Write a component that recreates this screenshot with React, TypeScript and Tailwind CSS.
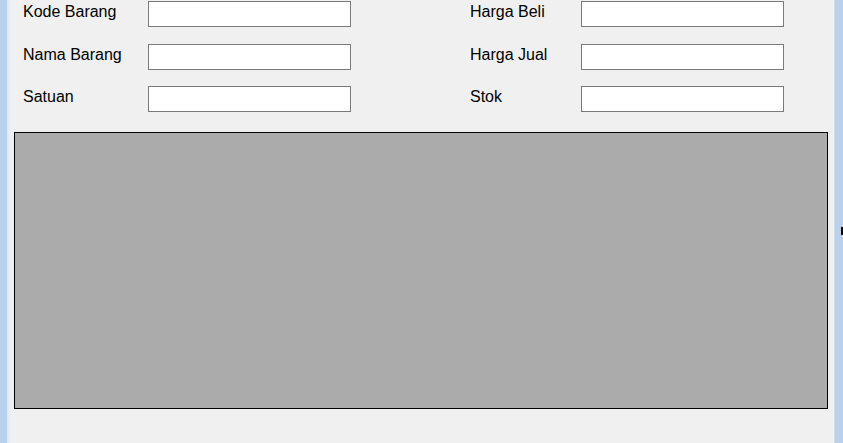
import React from "react";

function Field({ label, labelW }: { label: string; labelW: string }) {
  return (
    <div className="flex items-start">
      <div className={`${labelW} mt-[2px] text-[16px] leading-[18px] text-black`}>{label}</div>
      <div className="w-[203px] h-[26px] border border-[#7a7a7a] bg-white" />
    </div>
  );
}

export default function App() {
  const left = ["Kode Barang", "Nama Barang", "Satuan"];
  const right = ["Harga Beli", "Harga Jual", "Stok"];
  const tops = ["mt-[1px]", "mt-[17px]", "mt-[16px]"];
  return (
    <div
      className="w-[843px] h-[443px] flex bg-[#f0f0f0] overflow-hidden"
      style={{ fontFamily: '"Liberation Sans", Arial, sans-serif' }}
    >
      <div className="w-[7px] h-full bg-[#b9d1ea]" />
      <div className="w-[4px] h-full bg-gradient-to-r from-[#dce7f3] to-[#eef1f5]" />
      <div className="flex-1 flex flex-col">
        <div className="flex flex-col">
          {left.map((l, i) => (
            <div key={l} className={`flex pl-[12px] ${tops[i]}`}>
              <Field label={l} labelW="w-[125px]" />
              <div className="w-[119px]" />
              <Field label={right[i]} labelW="w-[111px]" />
            </div>
          ))}
        </div>
        <div className="mt-[20px] ml-[3px] w-[814px] h-[277px] border border-black bg-[#ababab]" />
      </div>
      <div className="relative w-[9px] h-full flex">
        <div className="w-[1px] h-full bg-[#cadcef]" />
        <div className="flex-1 h-full bg-[#b9d1ea]" />
        <div className="absolute left-[7px] top-[227px] w-[2px] h-[8px] bg-black" />
      </div>
    </div>
  );
}
